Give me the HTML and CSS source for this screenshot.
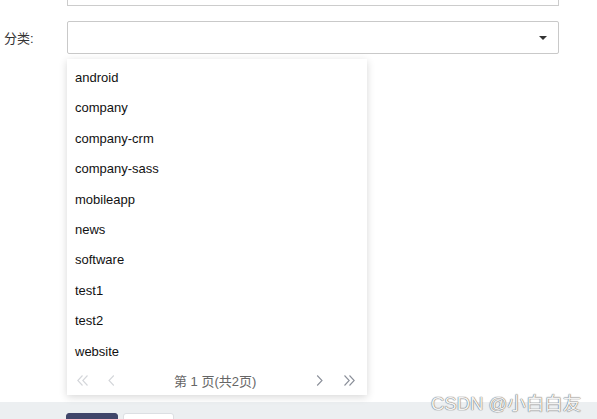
FILE: index.html
```html
<!DOCTYPE html>
<html lang="zh">
<head>
<meta charset="utf-8">
<title>分类</title>
<link rel="stylesheet" href="styles.css">
</head>
<body>
<div class="page">
  <div class="form">
    <div class="row">
      <span class="label"></span>
      <div class="input"></div>
    </div>
    <div class="row">
      <span class="label">分类:</span>
      <div class="select"><span class="caret"></span></div>
    </div>
  </div>

  <div class="footer">
    <button class="btn primary"></button>
    <button class="btn"></button>
  </div>

  <div class="dropdown">
    <ul class="options">
      <li>android</li>
      <li>company</li>
      <li>company-crm</li>
      <li>company-sass</li>
      <li>mobileapp</li>
      <li>news</li>
      <li>software</li>
      <li>test1</li>
      <li>test2</li>
      <li>website</li>
    </ul>
    <div class="pager">
      <span class="pg first disabled">
        <svg width="12" height="11" viewBox="0 0 12 11"><path d="M5.5 0.5 L0.8 5.5 L5.5 10.5 M10.5 0.5 L5.8 5.5 L10.5 10.5" fill="none" stroke="currentColor" stroke-width="1.1"/></svg>
      </span>
      <span class="pg prev disabled">
        <svg width="7" height="11" viewBox="0 0 7 11"><path d="M5.8 0.5 L1 5.5 L5.8 10.5" fill="none" stroke="currentColor" stroke-width="1.1"/></svg>
      </span>
      <span class="pg-text">第 1 页(共2页)</span>
      <span class="pg next">
        <svg width="7" height="11" viewBox="0 0 7 11"><path d="M1.2 0.5 L6 5.5 L1.2 10.5" fill="none" stroke="currentColor" stroke-width="1.1"/></svg>
      </span>
      <span class="pg last">
        <svg width="12" height="11" viewBox="0 0 12 11"><path d="M1.5 0.5 L6.2 5.5 L1.5 10.5 M6.5 0.5 L11.2 5.5 L6.5 10.5" fill="none" stroke="currentColor" stroke-width="1.1"/></svg>
      </span>
    </div>
  </div>

  <div class="watermark">CSDN @小白白友</div>
</div>
</body>
</html>
```

FILE: styles.css
```css
html, body {
  margin: 0;
  padding: 0;
  background: #fff;
}

.page {
  position: relative;
  width: 597px;
  height: 419px;
  overflow: hidden;
  display: flex;
  flex-direction: column;
  font-family: "Liberation Sans", Arial, "Noto Sans CJK SC", sans-serif;
  font-size: 13px;
  color: #222;
}

.form {
  margin-top: -28px;
  display: flex;
  flex-direction: column;
  gap: 15px;
}

.row {
  display: flex;
  align-items: center;
}

.label {
  width: 63px;
  padding-left: 4px;
  color: #333;
  font-size: 13px;
}

.input {
  width: 492px;
  height: 34px;
  box-sizing: border-box;
  border: 1px solid #ccc;
  background: #fff;
}

.select {
  width: 492px;
  height: 33px;
  box-sizing: border-box;
  border: 1px solid #c9c9c9;
  border-radius: 2px;
  background: #fff;
  display: flex;
  align-items: center;
  justify-content: flex-end;
  padding-right: 11px;
}

.caret {
  width: 0;
  height: 0;
  border-left: 4px solid transparent;
  border-right: 4px solid transparent;
  border-top: 4px solid #333;
  margin-top: 1px;
}

.footer {
  margin-top: auto;
  height: 6px;
  background: #eceff1;
  display: flex;
  align-items: flex-start;
  gap: 5px;
  padding: 11px 0 0 66px;
  box-sizing: content-box;
  flex: none;
}

.btn {
  height: 30px;
  padding: 0;
  border-radius: 3px;
  border: 1px solid #dcdfe3;
  background: #fff;
  width: 51px;
  flex: none;
}

.btn.primary {
  width: 52px;
  background: #40466a;
  border-color: #40466a;
}

.dropdown {
  position: absolute;
  top: 59px;
  left: 67px;
  width: 300px;
  height: 336px;
  background: #fff;
  box-shadow: 0 2px 8px rgba(0, 0, 0, 0.16);
  display: flex;
  flex-direction: column;
  padding-top: 4px;
  box-sizing: border-box;
}

.options {
  list-style: none;
  margin: 0;
  padding: 0;
}

.options li {
  height: 30.4px;
  line-height: 30.4px;
  padding-left: 8px;
  color: #111;
  white-space: nowrap;
}

.pager {
  flex: 1;
  display: flex;
  align-items: center;
  color: #888;
}

.pg {
  display: flex;
  align-items: center;
  color: #8a8f99;
}

.pg.disabled {
  color: #d4d6da;
}

.pg svg {
  display: block;
}

.first { margin-left: 10px; }
.prev { margin-left: 19px; }
.pg-text {
  margin-left: 59px;
  color: #666;
  white-space: nowrap;
}
.next { margin-left: 60px; }
.last { margin-left: 20px; }

.watermark {
  position: absolute;
  left: 431px;
  top: 389px;
  font-size: 18.5px;
  color: #f2f2f2;
  text-shadow: 0 0 1px #666, 0 0 1px #666;
  white-space: nowrap;
  font-family: "Liberation Sans", Arial, "Noto Sans CJK SC", sans-serif;
}
```
